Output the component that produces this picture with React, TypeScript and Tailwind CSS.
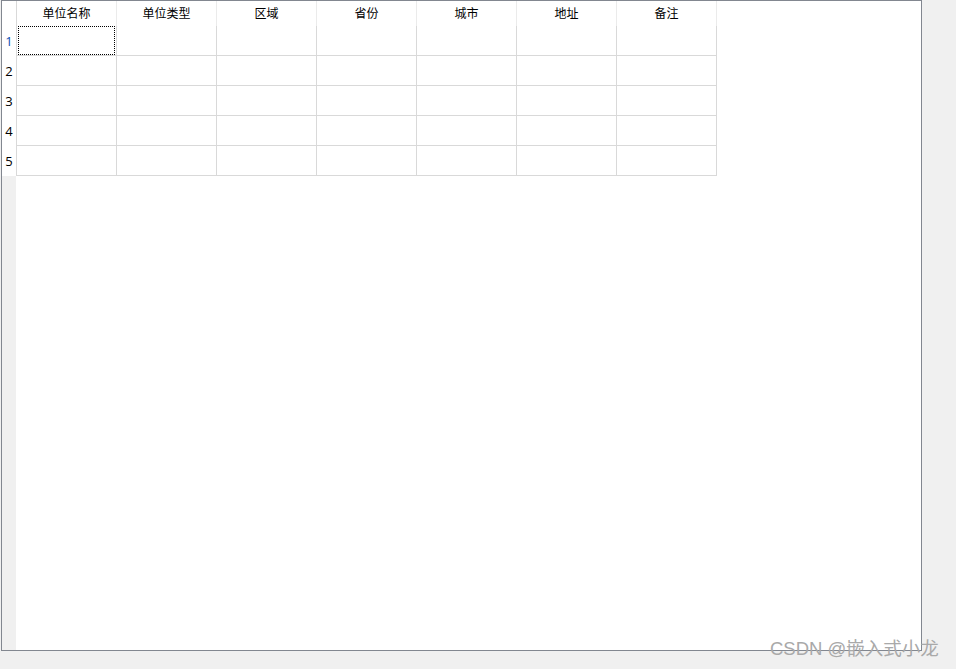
const columns = ["单位名称", "单位类型", "区域", "省份", "城市", "地址", "备注"];
const rows = [1, 2, 3, 4, 5];

export default function App() {
  return (
    <div
      className="relative w-[956px] h-[669px] bg-[#f0f0f0] overflow-hidden"
      style={{ fontFamily: '"Noto Sans CJK SC", "Noto Sans", sans-serif' }}
    >
      {/* grid frame */}
      <div className="ml-[1px] w-[921px] h-[651px] border border-[#828790] bg-white flex">
        {/* row header strip */}
        <div className="w-[14px] flex flex-col">
          <div className="h-[25px] bg-white" />
          {rows.map((r) => (
            <div
              key={r}
              className={`h-[30px] bg-white flex items-center justify-center text-[13px] leading-none ${
                r === 1 ? "text-[#0b4fb3]" : "text-black"
              }`}
              style={{ fontFamily: '"Open Sans", "Noto Sans", sans-serif' }}
            >
              {r}
            </div>
          ))}
          <div className="flex-1 bg-[#f0f0f0]" />
        </div>

        {/* table */}
        <div className="flex flex-col">
          <div className="flex border-l border-[#d9d9d9]">
            {columns.map((c) => (
              <div
                key={c}
                className="w-[100px] h-[25px] border-r border-[#ebebeb] flex justify-center pt-[4px] text-[12px] leading-[16px] text-black"
              >
                {c}
              </div>
            ))}
          </div>
          {rows.map((r) => (
            <div key={r} className="flex border-l border-[#d9d9d9]">
              {columns.map((c, ci) => (
                <div
                  key={c}
                  className="relative w-[100px] h-[30px] border-r border-b border-[#d9d9d9]"
                >
                  {r === 1 && ci === 0 && (
                    <div className="absolute left-[1px] top-0 w-[97px] h-[29px] border border-dotted border-black" />
                  )}
                </div>
              ))}
            </div>
          ))}
        </div>
      </div>

      {/* watermark */}
      <div
        className="absolute left-[770px] top-[637px] text-[18.5px] leading-[24px] text-[#a9a9a9] whitespace-nowrap"
        style={{ fontFamily: '"Liberation Sans", "Noto Sans CJK SC", sans-serif' }}
      >
        CSDN @嵌入式小龙
      </div>
    </div>
  );
}
